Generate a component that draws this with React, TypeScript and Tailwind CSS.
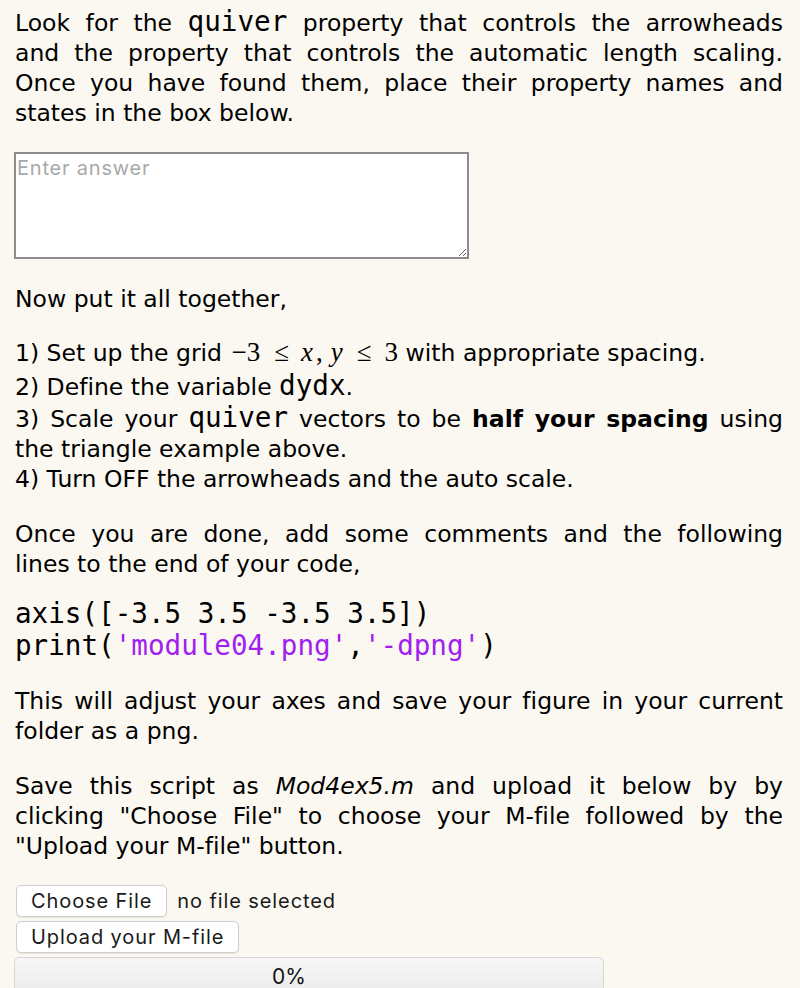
import React from "react";

const mono = { fontFamily: '"DejaVu Sans Mono", "Liberation Mono", monospace' };
const sys = { fontFamily: 'Inter, "Liberation Sans", Arial, sans-serif' };

function J({ children }: { children: React.ReactNode }) {
  return <div className="whitespace-nowrap text-justify [text-align-last:justify]">{children}</div>;
}

function Q({ children }: { children: React.ReactNode }) {
  return (
    <span className="text-[27.6px] leading-none" style={mono}>
      {children}
    </span>
  );
}

export default function App() {
  return (
    <div
      className="min-h-[988px] bg-[#fbf8f1] pl-[15px] pr-[17px] pt-[8px] text-black text-[23.5px] leading-[30px] [font-variant-ligatures:none]"
      style={{ fontFamily: '"DejaVu Sans", Verdana, sans-serif' }}
    >
      <div>
        <J>
          Look for the <Q>quiver</Q> property that controls the arrowheads
        </J>
        <J>and the property that controls the automatic length scaling.</J>
        <J>Once you have found them, place their property names and</J>
        <div>states in the box below.</div>
      </div>

      <textarea
        placeholder="Enter answer"
        className="-ml-[1px] mt-[24px] block w-[455px] h-[107px] border-2 border-[#8c8c8c] bg-white px-[1px] py-0 text-[20px] leading-[28px] tracking-[0.8px] text-black placeholder:text-[#a9a9a9] outline-none resize"
        style={sys}
      />

      <div className="mt-[25px]">Now put it all together,</div>

      <div className="mt-[22px]">
        <div className="h-[34px] leading-[34px] whitespace-nowrap">
          1) Set up the grid{" "}
          <span
            className="ml-[2px] text-[27px] leading-none"
            style={{ fontFamily: '"Liberation Serif", "Times New Roman", serif' }}
          >
            −3<span className="ml-[14px] mr-[12px]">≤</span>
            <i>x</i>
            <span className="ml-[3px]">,</span>
            <i className="ml-[8px]">y</i>
            <span className="ml-[14px] mr-[13px]">≤</span>3
          </span>{" "}
          with appropriate spacing.
        </div>
        <div className="h-[34px] leading-[34px]">
          2) Define the variable <Q>dydx</Q>.
        </div>
        <J>
          3) Scale your <Q>quiver</Q> vectors to be <b>half your spacing</b> using
        </J>
        <div>the triangle example above.</div>
        <div>4) Turn OFF the arrowheads and the auto scale.</div>
      </div>

      <div className="mt-[25px]">
        <J>Once you are done, add some comments and the following</J>
        <div>lines to the end of your code,</div>
      </div>

      <pre className="mt-[19px] text-[27.6px] leading-[32px]" style={mono}>
        {"axis([-3.5 3.5 -3.5 3.5])\nprint("}
        <span className="text-[#a020f0]">'module04.png'</span>
        {","}
        <span className="text-[#a020f0]">'-dpng'</span>
        {")"}
      </pre>

      <div className="mt-[24px]">
        <J>This will adjust your axes and save your figure in your current</J>
        <div>folder as a png.</div>
      </div>

      <div className="mt-[25px]">
        <J>
          Save this script as <i>Mod4ex5.m</i> and upload it below by by
        </J>
        <J>clicking "Choose File" to choose your M-file followed by the</J>
        <div>"Upload your M-file" button.</div>
      </div>

      <div className="mt-[24px] flex flex-col gap-[4px] pb-4" style={sys}>
        <div className="flex items-center gap-[10px]">
          <button className="ml-[1px] h-[32px] rounded-[5px] border border-[#cfcfcf] bg-white px-[14px] text-[20px] leading-none tracking-[0.9px] text-[#1a1a1a] shadow-[0_1px_1px_rgba(0,0,0,0.08)]">
            Choose File
          </button>
          <span className="text-[20px] tracking-[0.9px] text-[#1a1a1a]">no file selected</span>
        </div>
        <div>
          <button className="ml-[1px] h-[32px] rounded-[5px] border border-[#cfcfcf] bg-white px-[14px] text-[20px] leading-none tracking-[0.9px] text-[#1a1a1a] shadow-[0_1px_1px_rgba(0,0,0,0.08)]">
            Upload your M-file
          </button>
        </div>
        <div className="-ml-[1px] flex h-[36px] w-[590px] items-start justify-center rounded-[5px] border border-[#d6d6d6] bg-gradient-to-b from-[#f7f7f7] to-[#ececec] pr-[40px] pt-[4px] text-[21px] text-[#111]">
          0%
        </div>
      </div>
    </div>
  );
}
